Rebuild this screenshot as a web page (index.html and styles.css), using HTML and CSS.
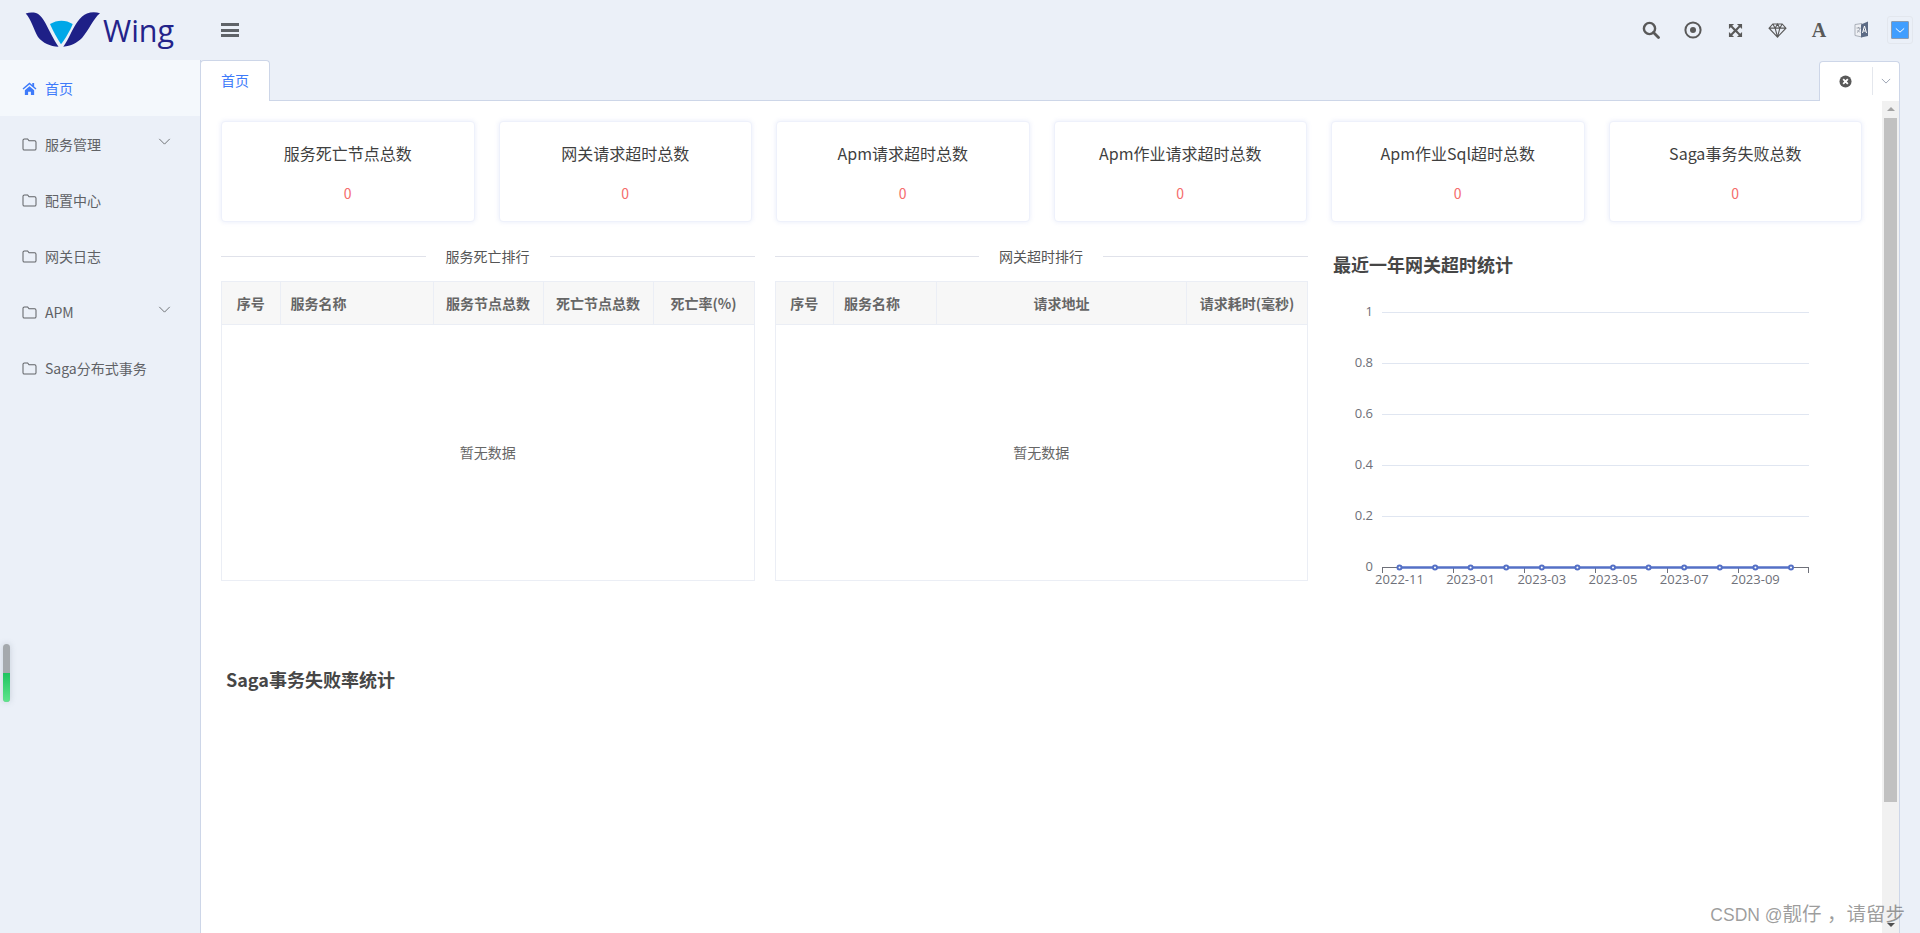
FILE: index.html
```html
<!DOCTYPE html>
<html lang="zh">
<head>
<meta charset="utf-8">
<title>Wing</title>
<link rel="stylesheet" href="styles.css">
</head>
<body>
<header class="topbar">
  <div class="logo">
    <svg class="logo-mark" viewBox="0 0 80 40" width="80" height="40">
      <path fill="#1e2087" d="M0.700 3.500C4 2.300 8 2.300 11 3C17 5 21 14 25 22C28 28 31 33 33.500 36.700C25 36.500 18 33 13 27C9 20 6 9 0.700 3.500Z"/>
      <path fill="#1e2087" d="M75 3.300C71 2 66 2 62 3.500C55 6 50 15 46 23C43 29 41 33 38.300 36.700C46 36 52 33 57 28C64 20 68 9 75 3.300Z"/>
      <path fill="#00a7e8" d="M25 14C32 9.500 41 9.500 47.700 14C45 21 40 29 36 34.300C32 28 28 21 25 14Z"/>
    </svg>
    <span class="logo-text">Wing</span>
  </div>
  <button class="hamburger" aria-label="menu"><span></span><span></span><span></span></button>
  <div class="tools">
    <span class="tool"><svg viewBox="0 0 18 18" width="18" height="18"><circle cx="7.500" cy="7.500" r="5.600" fill="none" stroke="#595959" stroke-width="2.400"/><path d="M11.500 11.500L16.500 16.500" stroke="#595959" stroke-width="2.800" stroke-linecap="round"/></svg></span>
    <span class="tool"><svg viewBox="0 0 18 18" width="18" height="18"><circle cx="9" cy="9" r="7.600" fill="none" stroke="#595959" stroke-width="2"/><circle cx="9" cy="9" r="3" fill="#595959"/></svg></span>
    <span class="tool"><svg viewBox="0 0 16 16" width="15" height="15"><path fill="#595959" d="M1 1h5.500L4.500 3 8 6.300 11.500 3 9.500 1H15v5.500l-2-2L9.700 8l3.300 3.500 2-2V15H9.500l2-2L8 9.700 4.500 13l2 2H1V9.500l2 2L6.300 8 3 4.500l-2 2z"/></svg></span>
    <span class="tool"><svg viewBox="0 0 20 16" width="19" height="15"><path fill="none" stroke="#595959" stroke-width="1.200" d="M5 1h10l4 4.500L10 15 1 5.500zM1 5.500h18M5 1l2.500 4.500L10 1l2.500 4.500L15 1M7.500 5.500L10 15l2.500-9.500"/></svg></span>
    <span class="tool tool-a">A</span>
    <span class="tool"><svg viewBox="0 0 15 18" width="15" height="18"><path fill="#eef0f4" stroke="#a9afb9" stroke-width="1" d="M1 3.500l7-1V16l-7-1.500z"/><path fill="#5c6b85" d="M7 3.500l7-3V15l-7 1.500z"/><path fill="none" stroke="#fff" stroke-width="1" d="M8.500 12l2-7 2 7M9.300 10h2.500"/><path fill="none" stroke="#8b929e" stroke-width="0.800" d="M2.500 7h4M4.500 6v1M3 11.500c1.500-1 2.500-2.500 3-4.500M3.500 9l2.500 2.500"/></svg></span>
    <span class="select-box"><span class="select-btn"><svg viewBox="0 0 12 8" width="10" height="7"><path d="M1 1.500l5 4.500 5-4.500" fill="none" stroke="#fff" stroke-width="1.200"/></svg></span></span>
  </div>
</header>

<div class="shell">
  <nav class="sidebar">
    <a class="nav-item is-active">
      <svg class="nav-icon" viewBox="0 0 16 14" width="15" height="13"><path fill="#3e7bfa" d="M8 0.500L0.500 7l1 1.200L8 2.700l6.500 5.500 1-1.200-2.500-2.200V1h-2v2.300zM3 9v5h3.500v-3.500h3V14H13V9L8 4.500z"/></svg>
      <span>首页</span>
    </a>
    <a class="nav-item">
      <svg class="nav-icon" viewBox="0 0 16 14" width="15" height="13"><use href="#folder"/></svg>
      <span>服务管理</span>
      <svg class="nav-arrow" viewBox="0 0 14 8" width="13" height="7"><path d="M1 1l6 6 6-6" fill="none" stroke="#606266" stroke-width="1"/></svg>
    </a>
    <a class="nav-item">
      <svg class="nav-icon" viewBox="0 0 16 14" width="15" height="13"><use href="#folder"/></svg>
      <span>配置中心</span>
    </a>
    <a class="nav-item">
      <svg class="nav-icon" viewBox="0 0 16 14" width="15" height="13"><use href="#folder"/></svg>
      <span>网关日志</span>
    </a>
    <a class="nav-item">
      <svg class="nav-icon" viewBox="0 0 16 14" width="15" height="13"><use href="#folder"/></svg>
      <span>APM</span>
      <svg class="nav-arrow" viewBox="0 0 14 8" width="13" height="7"><path d="M1 1l6 6 6-6" fill="none" stroke="#606266" stroke-width="1"/></svg>
    </a>
    <a class="nav-item">
      <svg class="nav-icon" viewBox="0 0 16 14" width="15" height="13"><use href="#folder"/></svg>
      <span>Saga分布式事务</span>
    </a>
  </nav>

  <main class="main">
    <div class="tabbar">
      <div class="tab">首页</div>
      <div class="tab-tools">
        <svg class="tab-close" viewBox="0 0 14 14" width="13" height="13"><circle cx="7" cy="7" r="6.500" fill="#595959"/><path d="M4.500 4.500l5 5M9.500 4.500l-5 5" stroke="#fff" stroke-width="2"/></svg>
        <span class="tab-sep"></span>
        <svg class="tab-more" viewBox="0 0 12 7" width="10" height="6"><path d="M1 1l5 5 5-5" fill="none" stroke="#8a94a6" stroke-width="1"/></svg>
      </div>
    </div>
    <div class="viewport">
      <div class="content">
        <section class="cards">
          <div class="card"><div class="card-title">服务死亡节点总数</div><div class="card-num">0</div></div>
          <div class="card"><div class="card-title">网关请求超时总数</div><div class="card-num">0</div></div>
          <div class="card"><div class="card-title">Apm请求超时总数</div><div class="card-num">0</div></div>
          <div class="card"><div class="card-title">Apm作业请求超时总数</div><div class="card-num">0</div></div>
          <div class="card"><div class="card-title">Apm作业Sql超时总数</div><div class="card-num">0</div></div>
          <div class="card"><div class="card-title">Saga事务失败总数</div><div class="card-num">0</div></div>
        </section>

        <section class="panels">
          <div class="panel">
            <div class="divider"><span>服务死亡排行</span></div>
            <div class="table-wrap">
              <table class="grid-table">
                <colgroup><col class="c1a"><col class="c1b"><col class="c1c"><col class="c1c"><col></colgroup>
                <thead><tr><th>序号</th><th class="left">服务名称</th><th>服务节点总数</th><th>死亡节点总数</th><th>死亡率(%)</th></tr></thead>
              </table>
              <div class="empty">暂无数据</div>
            </div>
          </div>
          <div class="panel">
            <div class="divider"><span>网关超时排行</span></div>
            <div class="table-wrap">
              <table class="grid-table">
                <colgroup><col class="c2a"><col class="c2b"><col class="c2c"><col></colgroup>
                <thead><tr><th>序号</th><th class="left">服务名称</th><th>请求地址</th><th>请求耗时(毫秒)</th></tr></thead>
              </table>
              <div class="empty">暂无数据</div>
            </div>
          </div>
          <div class="chart-panel">
            <h3 class="chart-title">最近一年网关超时统计</h3>
            <svg class="chart" viewBox="0 0 530 290" width="530" height="290">
              <g class="grid-lines">
                <path d="M49 15.500H476M49 66.500H476M49 117.500H476M49 168.500H476M49 219.500H476"/>
              </g>
              <g class="y-labels">
                <text x="40" y="19">1</text><text x="40" y="70">0.8</text><text x="40" y="121">0.6</text><text x="40" y="172">0.4</text><text x="40" y="223">0.2</text><text x="40" y="274">0</text>
              </g>
              <path class="axis" d="M49 270.500H476M49.500 271v5M120.500 271v5M191.500 271v5M262.500 271v5M334.500 271v5M405.500 271v5M475.500 271v5"/>
              <path class="line" d="M66.500 270.500H458"/>
              <g class="dots">
                <circle cx="66.500" cy="270.500" r="2"/><circle cx="102" cy="270.500" r="2"/><circle cx="137.600" cy="270.500" r="2"/><circle cx="173.200" cy="270.500" r="2"/><circle cx="208.800" cy="270.500" r="2"/><circle cx="244.400" cy="270.500" r="2"/><circle cx="280" cy="270.500" r="2"/><circle cx="315.600" cy="270.500" r="2"/><circle cx="351.200" cy="270.500" r="2"/><circle cx="386.800" cy="270.500" r="2"/><circle cx="422.400" cy="270.500" r="2"/><circle cx="458" cy="270.500" r="2"/>
              </g>
              <g class="x-labels">
                <text x="66.500" y="287">2022-11</text><text x="137.600" y="287">2023-01</text><text x="208.800" y="287">2023-03</text><text x="280" y="287">2023-05</text><text x="351.200" y="287">2023-07</text><text x="422.400" y="287">2023-09</text>
              </g>
            </svg>
          </div>
        </section>

        <h3 class="saga-title">Saga事务失败率统计</h3>
      </div>
      <div class="scrollbar">
        <span class="scroll-arrow up"></span>
        <span class="scroll-thumb"></span>
        <span class="scroll-arrow down"></span>
      </div>
    </div>
  </main>
</div>

<div class="level-widget"><span class="level-fill"></span></div>
<div class="watermark">CSDN @<span class="wm-cjk">靓仔 ，请留步</span></div>

<svg class="sprites" width="0" height="0">
  <symbol id="folder" viewBox="0 0 16 14"><path fill="none" stroke="#606266" stroke-width="1.100" d="M1 2.500C1 1.500 1.500 1 2.500 1H6l1.500 2H13.500C14.500 3 15 3.500 15 4.500V11.500C15 12.500 14.500 13 13.500 13H2.500C1.500 13 1 12.500 1 11.500z"/></symbol>
</svg>
</body>
</html>
```

FILE: styles.css
```css
* { box-sizing: border-box; }
html, body { margin: 0; height: 100%; overflow: hidden; }
body {
  background: #ebf0f8;
  color: #606266;
  font-family: "Noto Sans CJK SC", "Open Sans", sans-serif;
  font-size: 14px;
}
.sprites { position: absolute; }

/* top bar */
.topbar { height: 60px; display: flex; align-items: center; }
.logo { width: 200px; display: flex; align-items: center; padding-left: 25px; gap: 0; }
.logo-mark { flex: none; }
.logo-text {
  font-family: "Open Sans", sans-serif;
  font-size: 30.500px;
  line-height: 40px;
  color: #23238a;
  margin-left: -2px;
}
.hamburger {
  margin-left: 21px;
  width: 18px;
  height: 14px;
  padding: 0;
  border: 0;
  background: none;
  display: flex;
  flex-direction: column;
  justify-content: space-between;
}
.hamburger span { display: block; height: 3px; width: 18px; background: #5f6368; }
.tools { margin-left: auto; display: flex; align-items: center; padding-right: 7px; }
.tool { width: 42px; height: 28px; display: flex; align-items: center; justify-content: center; color: #595959; }
.tool-a { font-family: "Liberation Serif", serif; font-weight: 700; font-size: 20px; }
.select-box {
  width: 26px;
  height: 28px;
  margin-left: 5px;
  border: 1px solid #e3e7ee;
  border-radius: 3px;
  display: flex;
  align-items: center;
  justify-content: center;
}
.select-btn {
  width: 18px;
  height: 18px;
  background: #409eff;
  display: flex;
  align-items: center;
  justify-content: center;
  border: 1px solid #8a9db5;
  border-radius: 1px;
}

/* shell */
.shell { display: flex; height: 873px; }
.sidebar { width: 201px; flex: none; border-right: 1px solid #cdd6e8; }
.nav-item { height: 56px; display: flex; align-items: center; padding-left: 22px; color: #606266; }
.nav-item.is-active { background: #f4f8fc; color: #3e7bfa; }
.nav-icon { flex: none; margin-right: 8px; }
.nav-arrow { margin-left: auto; margin-right: 29px; margin-top: -5px; }

/* main */
.main { width: 1699px; display: flex; flex-direction: column; }
.tabbar { height: 41px; display: flex; justify-content: space-between; border-bottom: 1px solid #cdd6e8; }
.tab {
  width: 70px;
  margin-left: -1px;
  height: 41px;
  background: #fff;
  border: 1px solid #cdd6e8;
  border-bottom: 0;
  border-radius: 4px 4px 0 0;
  color: #3e7bfa;
  display: flex;
  align-items: center;
  justify-content: center;
  padding-bottom: 2px;
}
.tab-tools {
  width: 81px;
  height: 41px;
  margin-top: 1px;
  background: #fff;
  border: 1px solid #cdd6e8;
  border-bottom: 0;
  border-radius: 4px 4px 0 0;
  display: flex;
  align-items: center;
}
.tab-close { margin-left: 19px; margin-bottom: 2px; }
.tab-sep { width: 1px; height: 28px; background: #e4e7ed; margin-left: 20px; margin-bottom: 2px; }
.tab-more { margin-left: 8px; margin-bottom: 2px; }
.viewport { flex: 1; min-height: 0; display: flex; background: #fff; border-right: 1px solid #cdd6e8; }
.content { flex: 1; min-width: 0; padding: 20px 20px 0; }

/* cards */
.cards { display: grid; grid-template-columns: repeat(6, 1fr); gap: 24px; }
.card {
  height: 101px;
  background: #fff;
  border: 1px solid #eef1fb;
  border-radius: 4px;
  box-shadow: 0 0 5px rgba(100, 120, 220, .14);
  text-align: center;
  padding-top: 19px;
}
.card-title { font-size: 16px; line-height: 24px; color: #3f3f3f; }
.card-num { font-size: 14px; line-height: 20px; color: #f56c6c; margin-top: 18px; }

/* panels */
.panels { display: flex; margin-top: 23px; }
.panel { width: 533.500px; margin-right: 20px; flex: none; }
.divider { display: flex; align-items: center; height: 22px; color: #555; }
.divider::before, .divider::after { content: ""; height: 1px; background: #e0e2ea; }
.divider::before { flex: 1; }
.divider::after { width: 205px; }
.divider span { padding: 0 20px; }
.table-wrap { margin-top: 14px; height: 300px; border: 1px solid #ebeef5; display: flex; flex-direction: column; }
.grid-table { width: 100%; table-layout: fixed; border-collapse: collapse; }
.grid-table th {
  height: 42px;
  padding: 0;
  background: #f7f7f7;
  color: #666;
  font-size: 14px;
  font-weight: 700;
  text-align: center;
  border-right: 1px solid #ebeef5;
  border-bottom: 1px solid #ebeef5;
}
.grid-table th:last-child { border-right: 0; }
.grid-table th.left { text-align: left; padding-left: 10px; }
.c1a { width: 58px; }
.c1b { width: 153px; }
.c1c { width: 110px; }
.c2a { width: 58px; }
.c2b { width: 103px; }
.c2c { width: 250px; }
.empty { flex: 1; display: flex; align-items: center; justify-content: center; color: #666; }

/* chart */
.chart-panel { flex: 1; min-width: 0; margin-left: 5px; }
.chart-title { margin: 6px 0 0; font-size: 18px; line-height: 26px; font-weight: 700; color: #464646; }
.chart { display: block; margin-top: 20px; overflow: visible; }
.grid-lines path { stroke: #e0e6f1; fill: none; stroke-width: 1; }
.y-labels text { text-anchor: end; font-family: "Open Sans", sans-serif; font-size: 13px; fill: #6e7079; }
.x-labels text { text-anchor: middle; font-family: "Open Sans", sans-serif; font-size: 13px; fill: #6e7079; }
.axis { stroke: #6e7079; fill: none; stroke-width: 1; }
.line { stroke: #5470c6; stroke-width: 2.500; fill: none; }
.dots circle { fill: #fff; stroke: #5470c6; stroke-width: 2; }

.saga-title { margin: 79px 0 0 5px; font-size: 18px; line-height: 26px; font-weight: 700; color: #464646; }

/* scrollbar */
.scrollbar { width: 17px; flex: none; background: #f1f1f1; display: flex; flex-direction: column; align-items: center; }
.scroll-arrow { flex: none; height: 17px; width: 0; border-left: 4px solid transparent; border-right: 4px solid transparent; }
.scroll-arrow.up { border-bottom: 4px solid #a3a3a3; height: 4px; margin: 6px 0 7px; }
.scroll-arrow.down { border-top: 4px solid #505050; height: 4px; margin: auto 0 6px; }
.scroll-thumb { width: 13px; height: 684px; background: #c1c1c1; }

/* overlays */
.level-widget {
  position: absolute;
  left: 3px;
  top: 644px;
  width: 7px;
  height: 58px;
  border-radius: 3.500px;
  background: #a5a9ad;
  box-shadow: 0 0 6px rgba(120, 130, 150, .3);
  overflow: hidden;
}
.level-fill {
  position: absolute;
  left: 0;
  right: 0;
  bottom: 0;
  height: 29px;
  background: linear-gradient(#1fc45f, #5fe58d);
}
.watermark {
  position: absolute;
  right: 15px;
  top: 900px;
  font-size: 17.500px;
  line-height: 28px;
  color: rgba(60, 60, 60, .5);
  font-family: "Liberation Sans", "Noto Sans CJK SC", sans-serif;
}
.wm-cjk { font-size: 19.500px; }
```
